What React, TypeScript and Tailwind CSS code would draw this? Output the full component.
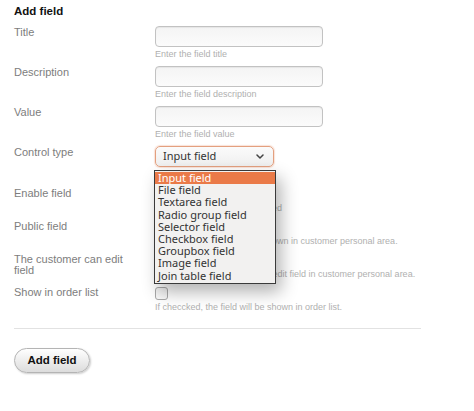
import { ReactNode } from 'react'

const options = [
  'Input field',
  'File field',
  'Textarea field',
  'Radio group field',
  'Selector field',
  'Checkbox field',
  'Groupbox field',
  'Image field',
  'Join table field',
]

function Label({ children }: { children: ReactNode }) {
  return (
    <div className="w-[141px] shrink-0 pr-[20px] text-[11px] leading-[11px] text-[#7d7d7d]">
      {children}
    </div>
  )
}

function Hint({ children }: { children?: ReactNode }) {
  return (
    <div className="mt-[1px] h-[12px] text-[9px] leading-[12px] text-[#b0b0b0] whitespace-nowrap">
      {children}
    </div>
  )
}

function TextRow({ label, hint }: { label: string; hint: string }) {
  return (
    <div className="flex mb-[6px]">
      <Label>
        <div className="pt-[1px]">{label}</div>
      </Label>
      <div>
        <div className="h-[21px] w-[168px] rounded-[4px] border border-[#c2c2c2] bg-gradient-to-b from-[#f4f4f4] to-[#fbfbfb] shadow-[inset_0_1px_1px_rgba(0,0,0,0.06)]" />
        <Hint>{hint}</Hint>
      </div>
    </div>
  )
}

function CheckRow({ label, hint }: { label: ReactNode; hint: string }) {
  return (
    <div className="flex mb-[6px]">
      <Label>
        <div className="pt-[1px]">{label}</div>
      </Label>
      <div>
        <div className="mt-[1px] h-[13px] w-[13px] rounded-[3px] border border-[#a9a9a9] bg-gradient-to-b from-[#f0f0f0] to-[#fafafa]" />
        <Hint>{hint}</Hint>
      </div>
    </div>
  )
}

export default function App() {
  return (
    <div className="relative w-[474px] h-[411px] overflow-hidden bg-white font-['Liberation_Sans',Arial,sans-serif]">
      <div className="px-[14px] pt-[4px]">
        <h2 className="h-[22px] text-[11.5px] leading-[14px] font-bold text-[#111]">Add field</h2>

        <TextRow label="Title" hint="Enter the field title" />
        <TextRow label="Description" hint="Enter the field description" />
        <TextRow label="Value" hint="Enter the field value" />

        {/* Control type */}
        <div className="flex mb-[7px]">
          <Label>
            <div className="pt-[1px]">Control type</div>
          </Label>
          <div>
            <div className="flex h-[21px] w-[119px] items-center justify-between rounded-[5px] border border-[#e3a07f] bg-gradient-to-b from-[#fbfbfb] to-[#efefef] pl-[7px] pr-[9px] shadow-[0_0_1px_1px_rgba(233,140,100,0.25)] font-['Noto_Sans',sans-serif] text-[11px] text-[#333]">
              <span>Input field</span>
              <svg width="8" height="5" viewBox="0 0 8 5" fill="none">
                <path d="M1 1l3 3 3-3" stroke="#444" strokeWidth="1.5" strokeLinecap="round" strokeLinejoin="round" />
              </svg>
            </div>
            <Hint />
          </div>
        </div>

        <CheckRow label="Enable field" hint="If checked, the field will be used" />
        <CheckRow label="Public field" hint="If checked, the field will be shown in customer personal area." />
        <CheckRow
          label="The customer can edit field"
          hint="If checked, the customer can edit field in customer personal area."
        />
        <CheckRow label="Show in order list" hint="If checcked, the field will be shown in order list." />

        <div className="mt-[15px] h-px w-[407px] bg-[#e2e2e2]" />

        <button className="mt-[19px] h-[25px] w-[76px] rounded-full border border-[#b4b4b4] bg-gradient-to-b from-[#ffffff] to-[#dcdcdc] text-[11.5px] font-bold text-[#111] shadow-[1px_1px_2px_rgba(0,0,0,0.2)]">
          Add field
        </button>
      </div>

      {/* open select list */}
      <div className="absolute left-[154px] top-[170px] w-[122px] border border-[#3a3a3a] bg-[#f2f1f0] py-[1px] shadow-[5px_8px_16px_rgba(0,0,0,0.3)] font-['Noto_Sans',sans-serif] text-[11px] leading-[12.2px] text-[#333]">
        {options.map((o, i) => (
          <div key={o} className={i === 0 ? 'bg-[#ea7a48] pl-[3px] text-white' : 'pl-[3px]'}>
            {o}
          </div>
        ))}
      </div>
    </div>
  )
}
